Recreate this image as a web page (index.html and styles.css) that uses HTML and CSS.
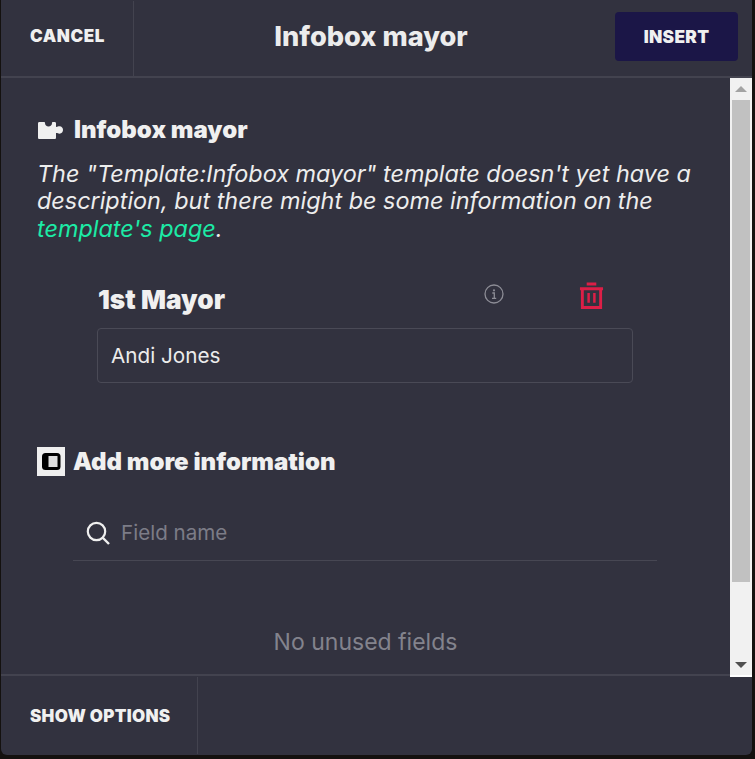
FILE: index.html
```html
<!DOCTYPE html>
<html lang="en">
<head>
<meta charset="utf-8">
<title>Infobox mayor</title>
<link rel="stylesheet" href="styles.css">
</head>
<body>
<div class="dialog">
  <header class="head">
    <button class="tool cancel">CANCEL</button>
    <h1 class="title">Infobox mayor</h1>
    <button class="insert">INSERT</button>
  </header>
  <div class="middle">
    <main class="content">
      <div class="heading heading-first">
        <svg class="puzzle" viewBox="1 1 26 17"><path fill="#f0f0f0" d="M1 2.500C1 1.500 1.500 1 2.500 1H7c.6 0 1 .4 1 1 0 2.200 1.500 3.500 3.500 3.500S15 4.200 15 2c0-.6.4-1 1-1h1.500c1 0 1.500.5 1.500 1.500V6c1.800 0 2-.7 3.500-.7 2.300 0 3.500 1.900 3.500 3.700s-1.200 3.700-3.500 3.700c-1.500 0-1.700-.7-3.500-.7v4.500c0 1-.5 1.500-1.500 1.500H2.500C1.500 18 1 17.500 1 16.500z"/></svg>
        <h2 class="heading-text">Infobox mayor</h2>
      </div>
      <p class="desc">The "Template:Infobox mayor" template doesn't yet have a description, but there might be some information on the <a class="link" href="#">template's page</a>.</p>
      <section class="field">
        <div class="field-head">
          <span class="field-name">1st Mayor</span>
          <svg class="info" viewBox="0 0 20 20"><circle cx="10" cy="10" r="9" fill="none" stroke="#8d8d96" stroke-width="1.300"/><circle cx="10" cy="6.300" r="1.100" fill="#8d8d96"/><path fill="none" stroke="#8d8d96" stroke-width="1.300" d="M8.300 9h2v5M8 14.300h4.200"/></svg>
          <svg class="trash" viewBox="0 0 26 28"><g fill="none" stroke="#dc1f47" stroke-width="3"><path d="M8 1.500h10M1 6.500h24"/><path d="M3.500 6.500v19.500h19V6.500"/><path d="M10 11v10M16 11v10" stroke-width="2.600"/></g></svg>
        </div>
        <div class="input">Andi Jones</div>
      </section>
      <div class="heading heading-second">
        <svg class="addicon" viewBox="0 0 28 29"><rect width="28" height="29" fill="#efefef"/><rect x="5" y="6" width="18.500" height="17" rx="3.500" fill="#000"/><rect x="11.500" y="9" width="9" height="11" fill="#dedede"/></svg>
        <h2 class="heading-text">Add more information</h2>
      </div>
      <div class="search">
        <svg class="glass" viewBox="0 0 24 24"><circle cx="10.500" cy="10.500" r="8.700" fill="none" stroke="#efefef" stroke-width="2.200"/><path d="M17 17l6 6" stroke="#efefef" stroke-width="2.400" fill="none"/></svg>
        <span class="placeholder">Field name</span>
      </div>
      <p class="empty">No unused fields</p>
    </main>
    <div class="scrollbar">
      <div class="sb-btn"><span class="arrow-up"></span></div>
      <div class="thumb"></div>
      <div class="sb-track"></div>
      <div class="sb-btn sb-btn-end"><span class="arrow-down"></span></div>
    </div>
  </div>
  <footer class="foot">
    <button class="tool options">SHOW OPTIONS</button>
  </footer>
</div>
</body>
</html>
```
FILE: styles.css
```css
* { box-sizing: border-box; }
html, body { height: 100%; }
body {
  margin: 0;
  background: #14110f;
  font-family: Inter, "Liberation Sans", sans-serif;
  color: #f0f0f0;
  overflow: hidden;
}
.dialog {
  width: 751px;
  height: 755px;
  margin-left: 1px;
  background: #32323f;
  border-radius: 0 0 6px 6px;
  display: flex;
  flex-direction: column;
}
.head {
  height: 78px;
  flex: none;
  display: flex;
  align-items: center;
  border-bottom: 2px solid #43434f;
}
button {
  font-family: inherit;
  border: 0;
  background: none;
  color: #f0f0f0;
  cursor: pointer;
}
.tool {
  font-size: 17px;
  font-weight: 900;
  letter-spacing: 0.300px;
  text-align: left;
  padding: 0 0 0 29px;
  border-right: 1px solid #43434f;
}
.cancel { width: 133px; height: 75px; padding-bottom: 4px; letter-spacing: 0.600px; }
.title {
  flex: 1;
  margin: 0;
  text-align: center;
  font-size: 27.200px;
  font-weight: 800;
  padding: 0 7px 4px 0;
  color: #ececec;
}
.insert {
  width: 123px;
  height: 49px;
  margin: 0 14px 3px 0;
  background: #1b1647;
  border-radius: 4px;
  font-size: 17.300px;
  font-weight: 900;
  letter-spacing: 0.300px;
}
.middle {
  flex: 1;
  min-height: 0;
  display: flex;
}
.content {
  flex: 1;
  min-width: 0;
  padding: 0 36px;
}
.heading {
  display: flex;
  align-items: center;
}
.heading-first { margin-top: 38px; height: 28px; gap: 10px; }
.heading-second { margin-top: 64px; height: 29px; gap: 8px; }
.heading-text {
  margin: 0;
  font-size: 24px;
  font-weight: 900;
}
.heading-first .heading-text { margin-bottom: 1px; }
.puzzle { width: 26px; height: 19px; flex: none; margin-left: 1px; }
.addicon { width: 28px; height: 29px; flex: none; }
.desc {
  margin: 15.500px 0 0;
  width: 665px;
  font-size: 23.400px;
  font-style: italic;
  line-height: 27.500px;
  color: #ededed;
}
.link { color: #1ceba6; text-decoration: none; }
.field { margin: 32.500px 0 0 60px; width: 536px; }
.field-head {
  height: 50px;
  margin-bottom: 3px;
  display: flex;
  align-items: center;
  position: relative;
}
.field-name { font-size: 26.200px; font-weight: 900; margin-left: 1px; }
.info { width: 20px; height: 20px; position: absolute; left: 387px; top: 9px; }
.trash { width: 25px; height: 28px; position: absolute; left: 482px; top: 7px; }
.input {
  height: 55px;
  border: 1px solid #4a4a56;
  border-radius: 4px;
  padding: 0 13px;
  display: flex;
  align-items: center;
  font-size: 20.700px;
  color: #ececec;
}
.search {
  margin: 30px 0 0 36px;
  width: 584px;
  height: 55px;
  display: flex;
  align-items: center;
  border-bottom: 1px solid #474753;
  padding: 0 0 0 13px;
  gap: 11px;
}
.glass { width: 24px; height: 24px; flex: none; }
.placeholder { font-size: 20.600px; color: #7c7c87; }
.empty {
  margin: 67px 0 0;
  text-align: center;
  font-size: 23px;
  color: #83838d;
}
.scrollbar {
  width: 22px;
  flex: none;
  position: relative;
  margin-bottom: -3px;
  background: #f1f1f1;
  display: flex;
  flex-direction: column;
  padding: 0 2px;
  border-bottom: 2px solid #fff;
}
.sb-btn {
  height: 22px;
  flex: none;
  display: flex;
  align-items: center;
  justify-content: center;
}
.sb-btn-end { height: 20px; }
.arrow-up {
  border-left: 6px solid transparent;
  border-right: 6px solid transparent;
  border-bottom: 6px solid #a3a3a3;
}
.arrow-down {
  border-left: 6px solid transparent;
  border-right: 6px solid transparent;
  border-top: 6px solid #505050;
}
.thumb { height: 482px; flex: none; background: #c1c1c1; }
.sb-track { flex: 1; }
.foot {
  height: 81px;
  flex: none;
  border-top: 2px solid #43434f;
  display: flex;
  align-items: center;
}
.options { width: 197px; height: 77px; }
```
